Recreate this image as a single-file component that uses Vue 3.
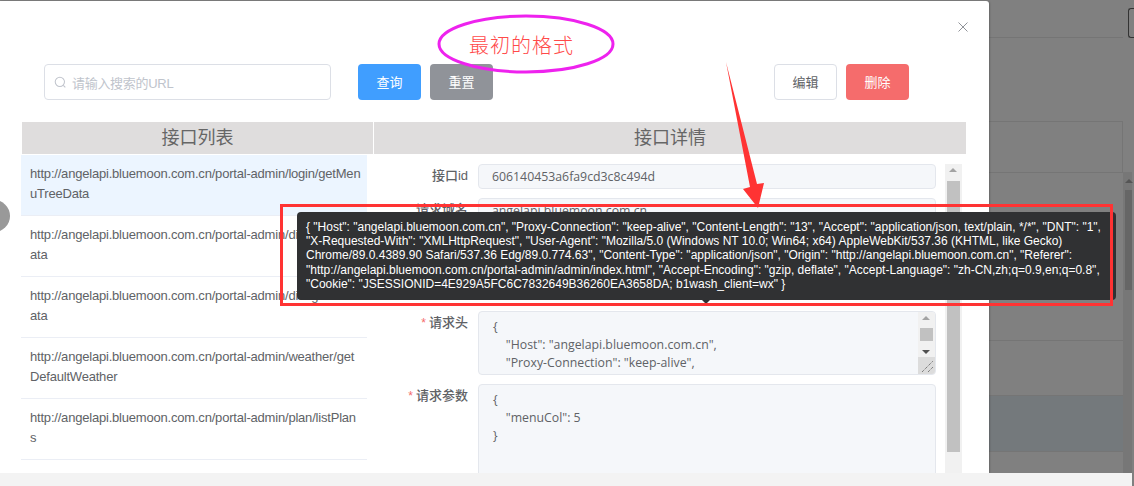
<template>
  <div class="page">
    <!-- dimmed page behind the dialog -->
    <div class="behind">
      <div class="behind-row behind-row--top"></div>
      <div class="behind-row behind-row--nav"></div>
      <div class="behind-row behind-row--head"></div>
      <div class="behind-row behind-row--a"></div>
      <div class="behind-row behind-row--b"></div>
      <div class="behind-row behind-row--slate"></div>
    </div>
    <div class="behind-scroll"><i class="behind-arrow"></i><i class="behind-thumb"></i></div>
    <div class="behind-icons"></div>
    <div class="left-blob"></div>

    <div class="dialog">
      <svg class="close" viewBox="0 0 10 10"><path d="M.5.5l9 9M9.5.5l-9 9" /></svg>

      <div class="toolbar">
        <div class="search">
          <svg class="search-icon" viewBox="0 0 14 14"><circle cx="6.3" cy="6.3" r="5" /><path d="M10 10l2.2 2.2" /></svg>
          <span>请输入搜索的URL</span>
        </div>
        <button class="btn btn--primary">查询</button>
        <button class="btn btn--gray">重置</button>
        <div class="toolbar-space"></div>
        <button class="btn btn--plain">编辑</button>
        <button class="btn btn--danger">删除</button>
      </div>

      <div class="heads">
        <div class="head head--list">接口列表</div>
        <div class="head head--detail">接口详情</div>
      </div>

      <div class="content">
        <ul class="api-list">
          <li v-for="(url, i) in urls" :key="i" class="api-item" :class="{ 'api-item--active': i === 0 }">{{ url }}</li>
        </ul>

        <div class="detail">
          <div class="form">
            <div class="form-row">
              <label>接口id</label>
              <div class="field">606140453a6fa9cd3c8c494d</div>
            </div>
            <div class="form-row">
              <label>请求域名</label>
              <div class="field">angelapi.bluemoon.com.cn</div>
            </div>
            <div class="form-row form-row--hidden">
              <div class="field field--hidden"></div>
            </div>
            <div class="form-row">
              <label><em>*</em>请求头</label>
              <div class="area area--head">
                <pre>{
    "Host": "angelapi.bluemoon.com.cn",
    "Proxy-Connection": "keep-alive",</pre>
                <div class="area-scroll">
                  <i class="tri tri--up"></i>
                  <i class="area-thumb"></i>
                  <i class="tri tri--down"></i>
                </div>
                <svg class="resizer" viewBox="0 0 17 17"><path d="M4 15L15 4M10 15l5-5" /></svg>
              </div>
            </div>
            <div class="form-row">
              <label><em>*</em>请求参数</label>
              <div class="area area--params">
                <pre>{
    "menuCol": 5
}</pre>
              </div>
            </div>
          </div>
          <div class="detail-scroll">
            <i class="tri tri--up"></i>
            <i class="detail-thumb"></i>
          </div>
        </div>
      </div>
    </div>

    <div class="foot"></div>

    <!-- tooltip over the form -->
    <div class="tooltip">
      <div v-for="line in tipLines" :key="line">{{ line }}</div>
      <i class="tooltip-tip"></i>
    </div>

    <!-- screenshot annotations -->
    <div class="mark-box"></div>
    <svg class="marks" viewBox="0 0 1134 486">
      <ellipse cx="526" cy="44" rx="87" ry="28" />
      <polygon points="726,62 757,184 764,183 758,208 743,189 750,187" />
    </svg>
    <div class="mark-text">最初的格式</div>
  </div>
</template>

<script setup>
const urls = [
  'http://angelapi.bluemoon.com.cn/portal-admin/login/getMenuTreeData',
  'http://angelapi.bluemoon.com.cn/portal-admin/dict/getListData',
  'http://angelapi.bluemoon.com.cn/portal-admin/dict/getListData',
  'http://angelapi.bluemoon.com.cn/portal-admin/weather/getDefaultWeather',
  'http://angelapi.bluemoon.com.cn/portal-admin/plan/listPlans',
]

const tipLines = [
  '{ "Host": "angelapi.bluemoon.com.cn", "Proxy-Connection": "keep-alive", "Content-Length": "13", "Accept": "application/json, text/plain, */*", "DNT": "1",',
  '"X-Requested-With": "XMLHttpRequest", "User-Agent": "Mozilla/5.0 (Windows NT 10.0; Win64; x64) AppleWebKit/537.36 (KHTML, like Gecko)',
  'Chrome/89.0.4389.90 Safari/537.36 Edg/89.0.774.63", "Content-Type": "application/json", "Origin": "http://angelapi.bluemoon.com.cn", "Referer":',
  '"http://angelapi.bluemoon.com.cn/portal-admin/admin/index.html", "Accept-Encoding": "gzip, deflate", "Accept-Language": "zh-CN,zh;q=0.9,en;q=0.8",',
  '"Cookie": "JSESSIONID=4E929A5FC6C7832649B36260EA3658DA; b1wash_client=wx" }',
]
</script>

<style>
html, body {
  margin: 0;
  background: #808080;
}
</style>

<style scoped>
.page {
  position: relative;
  width: 1134px;
  height: 486px;
  overflow: hidden;
  background: #808080;
  font-family: "Liberation Sans", "Noto Sans CJK SC", sans-serif;
  color: #606266;
}

.behind {
  position: absolute;
  top: 0;
  left: 989px;
  width: 134px;
  height: 452px;
  display: flex;
  flex-direction: column;
}

.behind-row { border-bottom: 1px solid #757575; box-sizing: border-box; }
.behind-row--top { height: 38px; }
.behind-row--nav { height: 84px; }
.behind-row--head { height: 51px; border-right: 1px solid #757575; }
.behind-row--a { height: 168px; }
.behind-row--b { height: 55px; }
.behind-row--slate { height: 56px; background: #74797c; }

.behind-scroll {
  position: absolute;
  top: 172px;
  left: 1123px;
  width: 9px;
  height: 301px;
  background: #777;
}

.behind-arrow {
  position: absolute;
  top: 7px;
  left: 2px;
  border: 4px solid transparent;
  border-top: 0;
  border-bottom-color: #555;
}

.behind-thumb {
  position: absolute;
  top: 18px;
  left: 2px;
  width: 7px;
  height: 100px;
  background: #666;
}

.behind-icons {
  position: absolute;
  top: 8px;
  right: 0;
  width: 6px;
  height: 30px;
  border-radius: 3px 0 0 3px;
  border: 1px solid #333;
  border-right: 0;
  box-sizing: border-box;
}

.left-blob {
  position: absolute;
  left: -22px;
  top: 200px;
  z-index: 2;
  width: 32px;
  height: 32px;
  border-radius: 50%;
  background: #999;
}

.dialog {
  position: absolute;
  top: 1px;
  left: 0;
  z-index: 1;
  width: 989px;
  height: 472px;
  box-sizing: border-box;
  padding: 63px 23px 0 21px;
  background: #fff;
  border-radius: 0 3px 0 0;
  box-shadow: 1px 0 2px rgba(0, 0, 0, 0.2);
  overflow: hidden;
}

.close {
  position: absolute;
  top: 21px;
  right: 21px;
  width: 10px;
  height: 10px;
  fill: none;
  stroke: #909399;
  stroke-width: 1;
}

.toolbar {
  display: flex;
  align-items: center;
  padding: 0 57px 0 23px;
  height: 36px;
}

.search {
  display: flex;
  align-items: center;
  gap: 5px;
  width: 287px;
  height: 36px;
  box-sizing: border-box;
  margin-right: 27px;
  padding-left: 9px;
  border: 1px solid #dcdfe6;
  border-radius: 4px;
  color: #c0c4cc;
  font-size: 13px;
  letter-spacing: -0.3px;
}

.search-icon {
  width: 13px;
  height: 13px;
  fill: none;
  stroke: #c0c4cc;
  stroke-width: 1.1;
}

.btn {
  width: 63px;
  height: 36px;
  margin-right: 9px;
  padding: 0 0 2px;
  border: 1px solid transparent;
  border-radius: 4px;
  color: #fff;
  font-family: inherit;
  font-size: 13px;
}

.btn--primary { background: #409eff; }
.btn--gray { background: #909399; }
.btn--plain { background: #fff; border-color: #dcdfe6; color: #606266; }
.btn--danger { background: #f56c6c; margin-right: 0; }

.toolbar-space { flex: 1; }

.heads {
  display: flex;
  gap: 1px;
  margin: 22px 0 1px 1px;
}

.head {
  height: 32px;
  line-height: 32px;
  background: #dfdddd;
  color: #666;
  font-size: 18px;
  text-align: center;
}

.head--list { width: 351px; }
.head--detail { width: 592px; }

.content {
  display: flex;
}

.api-list {
  width: 346px;
  margin: 0;
  padding: 0;
  list-style: none;
}

.api-item {
  box-sizing: border-box;
  height: 61px;
  padding: 9px 5.5px 0 9px;
  border-bottom: 1px solid #ebeef5;
  font-size: 13px;
  letter-spacing: -0.2px;
  line-height: 20px;
  word-break: break-all;
}

.api-item--active {
  background: #ecf5ff;
}

.detail {
  display: flex;
  flex: 1;
  padding: 9px 0 0 7px;
  min-width: 0;
}

.form {
  width: 562px;
}

.form-row {
  display: flex;
  margin-bottom: 9px;
}

.form-row label {
  width: 104px;
  flex: none;
  padding-right: 10px;
  box-sizing: border-box;
  font-size: 13px;
  font-weight: 500;
  line-height: 24px;
  text-align: right;
}

.form-row label em {
  margin-right: 3px;
  color: #f56c6c;
  font-size: 12px;
  font-style: normal;
}

.field,
.area {
  flex: 1;
  box-sizing: border-box;
  background: #f5f7fa;
  border: 1px solid #e4e7ed;
  border-radius: 4px;
  color: #606266;
  font-family: "Open Sans", "Noto Sans CJK SC", sans-serif;
  font-size: 12.3px;
}

.field {
  height: 25px;
  padding-left: 13px;
  line-height: 23px;
}

.field--hidden { height: 68px; margin-left: 104px; }
.form-row--hidden { margin-bottom: 11px; }

.area {
  position: relative;
  overflow: hidden;
}

.area pre {
  margin: 0;
  padding: 6px 14px 0;
  font: inherit;
  line-height: 18px;
}

.area--head { height: 64px; }
.area--params { height: 120px; }

.area-scroll {
  position: absolute;
  top: 0;
  right: 0;
  width: 17px;
  height: 46px;
  background: #f1f1f1;
}

.area-thumb {
  position: absolute;
  top: 16px;
  left: 2px;
  width: 13px;
  height: 13px;
  background: #c1c1c1;
}

.resizer {
  position: absolute;
  right: 0;
  bottom: 0;
  width: 17px;
  height: 17px;
  background: #dcdcdc;
  fill: none;
  stroke: #555;
  stroke-width: 1;
  stroke-dasharray: 1 1;
}

.tri {
  position: absolute;
  left: 4px;
  border: 4.5px solid transparent;
}

.tri--up {
  top: 4px;
  border-top: 0;
  border-bottom-color: #a3a3a3;
}

.tri--down {
  bottom: 4px;
  border-bottom: 0;
  border-top-color: #505050;
}

.detail-scroll {
  position: relative;
  flex: none;
  width: 17px;
  height: 320px;
  margin-left: 9px;
  background: #f1f1f1;
}

.detail-thumb {
  position: absolute;
  top: 17px;
  left: 2px;
  width: 13px;
  height: 271px;
  background: #c1c1c1;
}

.foot {
  position: absolute;
  left: 0;
  bottom: 0;
  z-index: 2;
  width: 1132px;
  height: 13px;
  background: #f3f3f3;
}

.tooltip {
  position: absolute;
  left: 297px;
  top: 212px;
  z-index: 3;
  width: 819px;
  height: 88px;
  box-sizing: border-box;
  padding: 8px 9px;
  background: #303133;
  border-radius: 4px;
  color: #fff;
  font-size: 12px;
  line-height: 14.2px;
  white-space: nowrap;
}

.tooltip-tip {
  position: absolute;
  left: 404px;
  bottom: -4px;
  border: 5px solid transparent;
  border-bottom: 0;
  border-top-color: #303133;
}

.mark-box {
  position: absolute;
  left: 280px;
  top: 204px;
  z-index: 4;
  width: 833px;
  height: 102px;
  box-sizing: border-box;
  border: 3px solid #ff3333;
}

.marks {
  position: absolute;
  top: 0;
  left: 0;
  z-index: 4;
  width: 1134px;
  height: 486px;
}

.marks ellipse {
  fill: none;
  stroke: #ee22ee;
  stroke-width: 3;
}

.marks polygon {
  fill: #ff3333;
}

.mark-text {
  position: absolute;
  left: 469px;
  top: 31px;
  z-index: 4;
  color: #ff4a4a;
  font-family: "Noto Sans CJK SC", sans-serif;
  font-size: 20px;
  font-weight: 300;
  letter-spacing: 1px;
  line-height: 28px;
}
</style>
